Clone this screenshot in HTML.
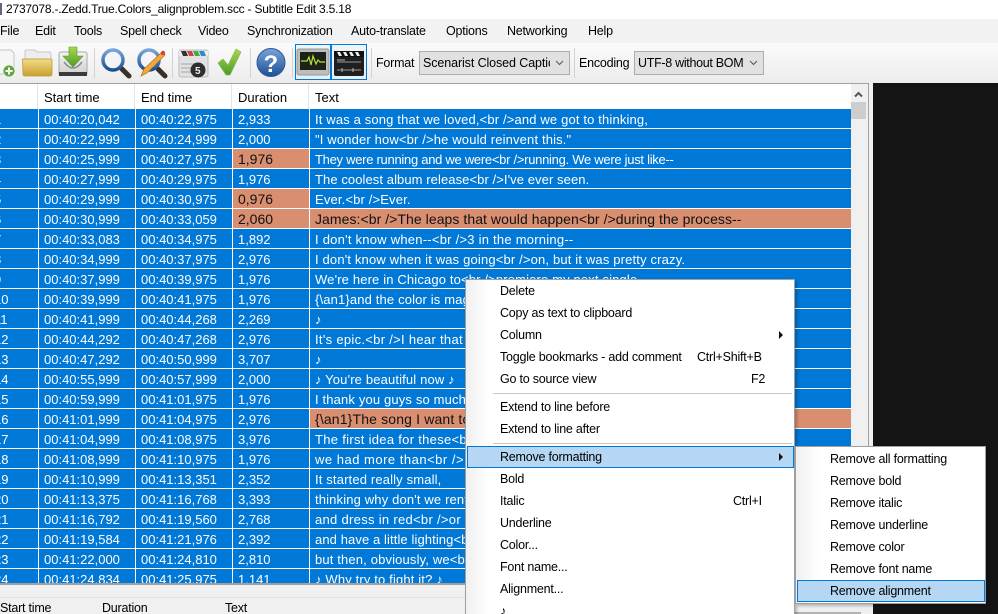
<!DOCTYPE html>
<html><head><meta charset="utf-8"><style>
html,body{margin:0;padding:0;width:998px;height:614px;overflow:hidden;background:#f0f0f0}
body{position:relative;font:13px/20px "Liberation Sans",sans-serif;color:#000}
.a{position:absolute;white-space:pre}
.sm{font-size:12.5px;letter-spacing:-.22px}
#title{left:0;top:0;width:998px;height:19px;background:#fff}
#menu{left:0;top:19px;width:998px;height:24px;background:#f2f2f2;font-size:12.5px;letter-spacing:-.22px}
#menu span{position:absolute;top:2px}
#tb{left:0;top:43px;width:998px;height:40px;background:linear-gradient(#fbfbfb,#f2f2f2 60%,#ececec)}
.sep{position:absolute;top:48px;width:1px;height:30px;background:#d2d2d2}
.combo{position:absolute;top:51px;height:22px;background:#e1e1e1;border:1px solid #adadad;line-height:23px;padding-left:3px;overflow:hidden;white-space:nowrap;font-size:12.5px;letter-spacing:-.1px}
.combo i{position:absolute;right:0;top:0;width:19px;height:22px;background:#e1e1e1}
.combo svg{position:absolute;right:5px;top:8px}
#list{left:0;top:83px;width:869px;height:502px;background:#fff;border-top:1px solid #a0a0a0;box-sizing:border-box;overflow:hidden}
#rb{left:868px;top:83px;width:1px;height:502px;background:#a0a0a0}
#bb{left:0;top:583px;width:869px;height:2px;background:#a0a0a0}
.h{position:absolute;top:4px}
.hl{position:absolute;top:0;width:1px;height:25px;background:#e5e5e5}
.r{position:absolute;left:0;width:851px;height:19px;display:flex;color:#fff;line-height:21px}
.r b{font-weight:normal;display:block;height:19px;background:#0078d7;margin-right:1px;overflow:hidden;white-space:pre;box-sizing:border-box}
.r b:nth-child(1){width:38px;padding-left:0;text-indent:-6px}
.r b:nth-child(2),.r b:nth-child(3){width:96px;padding-left:5px}
.r b:nth-child(4){width:76px;padding-left:5px}
.r b:nth-child(5){width:541px;margin-right:0;padding-left:5px;letter-spacing:.15px}
.r b.o{background:#d98e6f;color:#111;font-size:14px}
#sb{left:851px;top:84px;width:17px;height:499px;background:#f0f0f0}
#thumb{left:851px;top:102px;width:15px;height:17px;background:#cdcdcd}
#dark{left:873px;top:83px;width:125px;height:531px;background:#141414}
.m{position:absolute;background:#fff;border:1px solid #a0a0a0;box-sizing:border-box;box-shadow:2px 2px 3px rgba(0,0,0,.25);font-size:12.5px;letter-spacing:-.22px;line-height:21px}
.gut{position:absolute;left:0;top:0;bottom:0;width:23px;background:linear-gradient(90deg,#f0f0f0,#fafafa 70%,#fff)}
.it{position:absolute;white-space:pre}
.hi{position:absolute;background:#b5d7f3;border:1px solid #0078d7;box-sizing:border-box}
.ms{position:absolute;height:1px;background:#c8c8c8}
.arr{position:absolute;width:0;height:0;border-left:4px solid #111;border-top:4px solid transparent;border-bottom:4px solid transparent}
</style></head><body>

<div class="a" id="title"><span class="a" style="left:0;top:3px;width:2px;height:12px;background:#667"></span><span class="a" style="left:6px;top:-1px;font-size:12px;letter-spacing:-.2px">2737078.-.Zedd.True.Colors_alignproblem.scc - Subtitle Edit 3.5.18</span></div>

<div class="a" id="menu"><span style="left:0">File</span><span style="left:35px">Edit</span><span style="left:74px">Tools</span><span style="left:120px">Spell check</span><span style="left:198px">Video</span><span style="left:247px">Synchronization</span><span style="left:351px">Auto-translate</span><span style="left:446px">Options</span><span style="left:507px">Networking</span><span style="left:588px">Help</span></div>

<div class="a" id="tb"></div>
<svg class="a" style="left:0;top:43px" width="372" height="40" viewBox="0 43 372 40">
<defs>
<linearGradient id="fo" x1="0" y1="0" x2="0" y2="1"><stop offset="0" stop-color="#f2dc8a"/><stop offset="1" stop-color="#c99f2e"/></linearGradient>
<linearGradient id="gr" x1="0" y1="0" x2="0" y2="1"><stop offset="0" stop-color="#a8d84a"/><stop offset="1" stop-color="#4f9a2a"/></linearGradient>
<linearGradient id="bl" x1="0" y1="0" x2="0" y2="1"><stop offset="0" stop-color="#7aa4d8"/><stop offset="1" stop-color="#1d4f94"/></linearGradient>
<linearGradient id="tr" x1="0" y1="0" x2="0" y2="1"><stop offset="0" stop-color="#f4f4f4"/><stop offset="1" stop-color="#cfcfcf"/></linearGradient>
</defs>
<path d="M-2 50H11L14 53V74H-2Z" fill="#f6f6f6" stroke="#c4c4c4"/>
<circle cx="9" cy="71" r="6" fill="#5aa83c" stroke="#e8f2e0"/><path d="M9 67.500V74.500M5.500 71H12.500" stroke="#fff" stroke-width="2"/>
<path d="M25 59V51.500Q25 50 27 50H35L37 52H49Q51 52 51 54V59Z" fill="#eee" stroke="#c8c8c8"/>
<path d="M22.500 59H51.500Q52 59 52 60V74Q52 76 50 76H25Q23 76 23 74Z" fill="url(#fo)" stroke="#bc9a3c" stroke-width=".8"/>
<rect x="59" y="52" width="28" height="23" rx="2" fill="url(#tr)" stroke="#a8a8a8"/>
<rect x="59" y="72" width="28" height="4" fill="#3a3a3a"/>
<path d="M64 62Q73 74 82 62" fill="none" stroke="#8a8a8a" stroke-width="1.500"/>
<path d="M69 47H77V56H83L73 67L63 56H69Z" fill="url(#gr)" stroke="#5a9a30" stroke-width=".6"/>
<path d="M122 69L129 76" stroke="#3a3026" stroke-width="5" stroke-linecap="round"/>
<circle cx="113" cy="60" r="10" fill="#f1f4fb" fill-opacity=".75" stroke="url(#bl)" stroke-width="3.500"/>
<path d="M158 69L165 76" stroke="#3a3026" stroke-width="5" stroke-linecap="round"/>
<circle cx="149" cy="60" r="10" fill="#f1f4fb" fill-opacity=".75" stroke="url(#bl)" stroke-width="3.500"/>
<path d="M141 76L144 69L162 52L165 55L147 73Z" fill="#f0a838" stroke="#b87418" stroke-width=".7"/>
<circle cx="163" cy="53" r="2.200" fill="#d84040"/>
<rect x="179" y="50" width="29" height="27" rx="2" fill="#e2e2e2" stroke="#bcbcbc"/>
<rect x="179" y="51" width="29" height="5" fill="#eeeeee"/>
<path d="M181 51h5l2 5h-5z" fill="#333"/><path d="M187 51h5l2 5h-5z" fill="#c44"/><path d="M193 51h5l2 5h-5z" fill="#4a4"/><path d="M199 51h5l2 5h-5z" fill="#38c"/>
<path d="M181 64h14M181 68h14M181 72h14" stroke="#c4c4c4" stroke-width="2"/>
<circle cx="198" cy="70" r="7.500" fill="#2e2e2e"/>
<text x="195" y="74" font-size="10" font-weight="bold" fill="#eee" font-family="Liberation Sans">5</text>
<path d="M218 63L223 59L228 65L236 49L241 52L230 75H226Z" fill="url(#gr)" stroke="#86b860" stroke-width=".7"/>
<circle cx="271" cy="62.500" r="14" fill="url(#bl)" stroke="#2a5a9c"/>
<text x="263.500" y="72" font-size="24" font-weight="bold" fill="#fff" font-family="Liberation Sans">?</text>
<rect x="295.500" y="44.500" width="35" height="35" fill="#e4eef7" fill-opacity=".5" stroke="#0078d7"/>
<rect x="331.500" y="44.500" width="35" height="35" fill="#e4eef7" fill-opacity=".5" stroke="#0078d7"/>
<rect x="297" y="49" width="32" height="26" rx="2" fill="#bdbdbd" stroke="#989898"/>
<rect x="300" y="52" width="26" height="18" fill="#1c2218"/>
<path d="M301 61H307L309 57L311 65L313 56L316 64L318 60L320 62H325" fill="none" stroke="#b4e040" stroke-width="1.200"/>
<rect x="334" y="52" width="30" height="24" rx="2" fill="#1f1f1f"/>
<rect x="334" y="51" width="30" height="6" fill="#111"/>
<path d="M337 52h3l2 4h-3zM343 52h3l2 4h-3zM349 52h3l2 4h-3zM355 52h3l2 4h-3z" fill="#eee"/>
<path d="M337 62H361M337 70H361" stroke="#9a9a9a"/>
<path d="M337 60h8M342 68v4M353 68v4" stroke="#bbb"/>
</svg>
<div class="sep" style="left:94px"></div><div class="sep" style="left:172px"></div><div class="sep" style="left:250px"></div><div class="sep" style="left:292px"></div><div class="sep" style="left:371px"></div><div class="sep" style="left:574px"></div>

<span class="a sm" style="left:376px;top:53px">Format</span>
<div class="combo" style="left:419px;width:146px">Scenarist Closed Caption<i><svg width="9" height="6"><path d="M1 1L4.500 4.500L8 1" fill="none" stroke="#555"/></svg></i></div>
<span class="a sm" style="left:579px;top:53px">Encoding</span>
<div class="combo" style="left:634px;width:125px;letter-spacing:-.3px">UTF-8 without BOM<i><svg width="9" height="6"><path d="M1 1L4.500 4.500L8 1" fill="none" stroke="#555"/></svg></i></div>

<div class="a" id="dark"></div>

<div class="a" id="list">
<div class="hl" style="left:37px"></div><div class="hl" style="left:134px"></div><div class="hl" style="left:231px"></div><div class="hl" style="left:308px"></div>
<span class="h" style="left:44px">Start time</span><span class="h" style="left:141px">End time</span><span class="h" style="left:238px">Duration</span><span class="h" style="left:315px">Text</span>
<div class="r" style="top:25px"><b>1</b><b>00:40:20,042</b><b>00:40:22,975</b><b>2,933</b><b>It was a song that we loved,&lt;br /&gt;and we got to thinking,</b></div>
<div class="r" style="top:45px"><b>2</b><b>00:40:22,999</b><b>00:40:24,999</b><b>2,000</b><b>"I wonder how&lt;br /&gt;he would reinvent this."</b></div>
<div class="r" style="top:65px"><b>3</b><b>00:40:25,999</b><b>00:40:27,975</b><b class="o">1,976</b><b style="letter-spacing:-.28px">They were running and we were&lt;br /&gt;running. We were just like--</b></div>
<div class="r" style="top:85px"><b>4</b><b>00:40:27,999</b><b>00:40:29,975</b><b>1,976</b><b style="letter-spacing:.08px">The coolest album release&lt;br /&gt;I've ever seen.</b></div>
<div class="r" style="top:105px"><b>5</b><b>00:40:29,999</b><b>00:40:30,975</b><b class="o">0,976</b><b>Ever.&lt;br /&gt;Ever.</b></div>
<div class="r" style="top:125px"><b>6</b><b>00:40:30,999</b><b>00:40:33,059</b><b class="o">2,060</b><b class="o" style="letter-spacing:.06px">James:&lt;br /&gt;The leaps that would happen&lt;br /&gt;during the process--</b></div>
<div class="r" style="top:145px"><b>7</b><b>00:40:33,083</b><b>00:40:34,975</b><b>1,892</b><b style="letter-spacing:.24px">I don't know when--&lt;br /&gt;3 in the morning--</b></div>
<div class="r" style="top:165px"><b>8</b><b>00:40:34,999</b><b>00:40:37,975</b><b>2,976</b><b style="letter-spacing:.16px">I don't know when it was going&lt;br /&gt;on, but it was pretty crazy.</b></div>
<div class="r" style="top:185px"><b>9</b><b>00:40:37,999</b><b>00:40:39,975</b><b>1,976</b><b>We're here in Chicago to&lt;br /&gt;premiere my next single</b></div>
<div class="r" style="top:205px"><b>10</b><b>00:40:39,999</b><b>00:40:41,975</b><b>1,976</b><b>{\an1}and the color is magic</b></div>
<div class="r" style="top:225px"><b>11</b><b>00:40:41,999</b><b>00:40:44,268</b><b>2,269</b><b>♪</b></div>
<div class="r" style="top:245px"><b>12</b><b>00:40:44,292</b><b>00:40:47,268</b><b>2,976</b><b style="letter-spacing:.3px">It's epic.&lt;br /&gt;I hear that</b></div>
<div class="r" style="top:265px"><b>13</b><b>00:40:47,292</b><b>00:40:50,999</b><b>3,707</b><b>♪</b></div>
<div class="r" style="top:285px"><b>14</b><b>00:40:55,999</b><b>00:40:57,999</b><b>2,000</b><b>♪ You're beautiful now ♪</b></div>
<div class="r" style="top:305px"><b>15</b><b>00:40:59,999</b><b>00:41:01,975</b><b>1,976</b><b>I thank you guys so much--</b></div>
<div class="r" style="top:325px"><b>16</b><b>00:41:01,999</b><b>00:41:04,975</b><b>2,976</b><b class="o">{\an1}The song I want to</b></div>
<div class="r" style="top:345px"><b>17</b><b>00:41:04,999</b><b>00:41:08,975</b><b>3,976</b><b style="letter-spacing:.3px">The first idea for these&lt;br</b></div>
<div class="r" style="top:365px"><b>18</b><b>00:41:08,999</b><b>00:41:10,975</b><b>1,976</b><b style="letter-spacing:.5px">we had more than&lt;br /&gt;</b></div>
<div class="r" style="top:385px"><b>19</b><b>00:41:10,999</b><b>00:41:13,351</b><b>2,352</b><b>It started really small,</b></div>
<div class="r" style="top:405px"><b>20</b><b>00:41:13,375</b><b>00:41:16,768</b><b>3,393</b><b>thinking why don't we rent</b></div>
<div class="r" style="top:425px"><b>21</b><b>00:41:16,792</b><b>00:41:19,560</b><b>2,768</b><b style="letter-spacing:.3px">and dress in red&lt;br /&gt;or a</b></div>
<div class="r" style="top:445px"><b>22</b><b>00:41:19,584</b><b>00:41:21,976</b><b>2,392</b><b style="letter-spacing:.1px">and have a little lighting&lt;br</b></div>
<div class="r" style="top:465px"><b>23</b><b>00:41:22,000</b><b>00:41:24,810</b><b>2,810</b><b>but then, obviously, we&lt;br</b></div>
<div class="r" style="top:485px"><b>24</b><b>00:41:24,834</b><b>00:41:25,975</b><b>1,141</b><b>♪ Why try to fight it? ♪</b></div>
</div>
<div class="a" id="sb"></div><div class="a" id="thumb"></div>
<svg class="a" style="left:854px;top:91px" width="9" height="7"><path d="M1 5.500L4.500 2L8 5.500" fill="none" stroke="#555" stroke-width="2"/></svg>
<div class="a" id="rb"></div><div class="a" id="bb"></div>
<div class="a" style="left:0;top:597px;width:869px;height:1px;background:#e2e2e2"></div>
<span class="a sm" style="left:0;top:598px">Start time</span><span class="a sm" style="left:102px;top:598px">Duration</span><span class="a sm" style="left:225px;top:598px">Text</span>
<div class="a" style="left:795px;top:612px;width:66px;height:2px;background:#b4b4b4"></div>

<div class="m" style="left:465px;top:279px;width:330px;height:340px">
<div class="gut"></div>
<div class="it" style="left:34px;top:1px">Delete</div>
<div class="it" style="left:34px;top:23px">Copy as text to clipboard</div>
<div class="it" style="left:34px;top:45px">Column</div><div class="arr" style="left:313px;top:51px"></div>
<div class="it" style="left:34px;top:67px">Toggle bookmarks - add comment</div><div class="it" style="left:231px;top:67px">Ctrl+Shift+B</div>
<div class="it" style="left:34px;top:89px">Go to source view</div><div class="it" style="left:285px;top:89px">F2</div>
<div class="ms" style="left:27px;top:113px;width:299px"></div>
<div class="it" style="left:34px;top:117px">Extend to line before</div>
<div class="it" style="left:34px;top:139px">Extend to line after</div>
<div class="ms" style="left:27px;top:163px;width:299px"></div>
<div class="hi" style="left:1px;top:166px;width:327px;height:22px"></div>
<div class="it" style="left:34px;top:167px">Remove formatting</div><div class="arr" style="left:313px;top:173px"></div>
<div class="it" style="left:34px;top:189px">Bold</div>
<div class="it" style="left:34px;top:211px">Italic</div><div class="it" style="left:267px;top:211px">Ctrl+I</div>
<div class="it" style="left:34px;top:233px">Underline</div>
<div class="it" style="left:34px;top:255px">Color...</div>
<div class="it" style="left:34px;top:277px">Font name...</div>
<div class="it" style="left:34px;top:299px">Alignment...</div>
<div class="it" style="left:34px;top:321px">♪</div>
</div>

<div class="m" style="left:795px;top:446px;width:191px;height:158px">
<div class="gut" style="width:23px"></div>
<div class="it" style="left:34px;top:2px">Remove all formatting</div>
<div class="it" style="left:34px;top:24px">Remove bold</div>
<div class="it" style="left:34px;top:46px">Remove italic</div>
<div class="it" style="left:34px;top:68px">Remove underline</div>
<div class="it" style="left:34px;top:90px">Remove color</div>
<div class="it" style="left:34px;top:112px">Remove font name</div>
<div class="hi" style="left:1px;top:133px;width:188px;height:22px"></div>
<div class="it" style="left:34px;top:134px">Remove alignment</div>
</div>
</body></html>
